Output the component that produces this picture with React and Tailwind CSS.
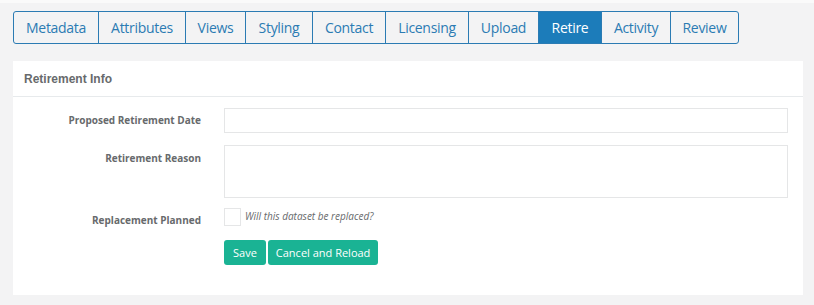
import React from "react";

const tabs = [
  { name: "Metadata", w: 86 },
  { name: "Attributes", w: 88 },
  { name: "Views", w: 61 },
  { name: "Styling", w: 68 },
  { name: "Contact", w: 74 },
  { name: "Licensing", w: 84 },
  { name: "Upload", w: 71 },
  { name: "Retire", w: 64 },
  { name: "Activity", w: 70 },
  { name: "Review", w: 69 },
];

const App = () => {
  return (
    <div
      className="min-h-[305px] bg-[#f3f3f4] border-t-[3px] border-[#fafafa]"
      style={{ fontFamily: '"Open Sans", sans-serif' }}
    >
      <div className="px-[13px] pt-[8px] pb-[10px]">
        {/* Tabs */}
        <div className="flex">
          {tabs.map((t, i) => (
            <div
              key={t.name}
              style={{ width: t.w }}
              className={`h-[33px] flex items-center justify-center text-[14px] tracking-[-0.3px] border border-[#2b7bb3] ${
                i > 0 ? "-ml-px" : ""
              } ${i === 0 ? "rounded-l-[3px]" : ""} ${
                i === tabs.length - 1 ? "rounded-r-[3px]" : ""
              } ${
                t.name === "Retire"
                  ? "bg-[#1c7cba] text-white"
                  : "bg-[#f3f3f4] text-[#2b7bb3]"
              }`}
            >
              {t.name}
            </div>
          ))}
        </div>

        {/* Panel */}
        <div className="mt-[17px] w-[790px] bg-white">
          <div className="h-[36px] flex items-center px-[11px] border-b border-[#e7eaec]">
            <span
              className="text-[12px] font-bold text-[#676a6c]"
              style={{ fontFamily: '"Liberation Sans", Arial, sans-serif' }}
            >
              Retirement Info
            </span>
          </div>

          <div className="pt-[11px] pb-[30px] pr-[15px] grid grid-cols-[188px_1fr] gap-x-[23px] text-[10px] leading-[15px] text-[#676a6c]">
            <div className="font-bold text-right h-[25px] flex items-center justify-end">
              Proposed Retirement Date
            </div>
            <input className="h-[25px] border border-[#e5e6e7] outline-none" />

            <div className="font-bold text-right pt-[6px] mt-[12px]">
              Retirement Reason
            </div>
            <textarea className="h-[53px] mt-[12px] border border-[#e5e6e7] outline-none resize-none" />

            <div className="font-bold text-right pt-[5px] mt-[10px] h-[30px]">
              Replacement Planned
            </div>
            <div className="flex items-start gap-[4px] mt-[10px] h-[30px]">
              <span className="w-[17px] h-[18px] border border-[#e5e6e7] bg-white" />
              <span className="italic pt-[1px]">Will this dataset be replaced?</span>
            </div>

            <div />
            <div className="flex gap-[2px] mt-[2px]">
              <button className="h-[25px] px-[9px] bg-[#1ab394] text-white text-[11px] rounded-[3px]">
                Save
              </button>
              <button className="h-[25px] px-[8px] bg-[#1ab394] text-white text-[11px] rounded-[3px]">
                Cancel and Reload
              </button>
            </div>
          </div>
        </div>
      </div>
    </div>
  );
};

export default App;
